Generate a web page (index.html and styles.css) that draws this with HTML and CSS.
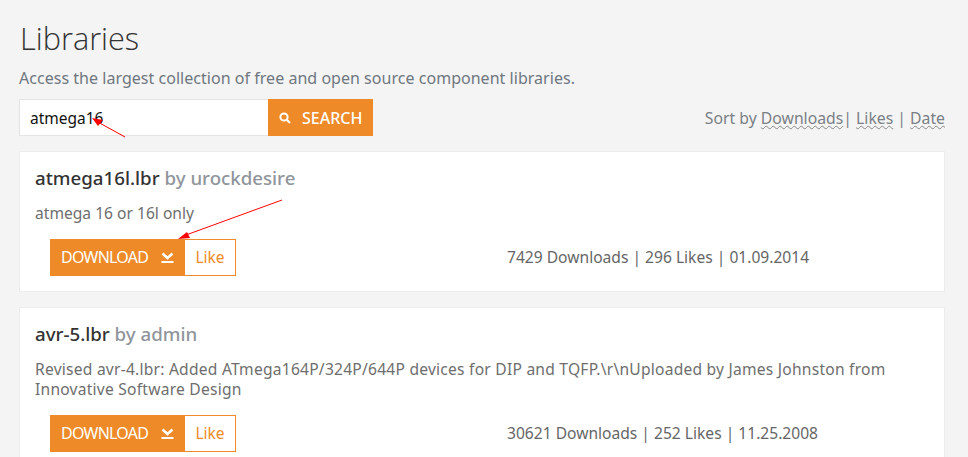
FILE: index.html
```html
<!DOCTYPE html>
<html lang="en">
<head>
    <meta charset="UTF-8">
    <title>Libraries</title>
    <link rel="stylesheet" href="styles.css">
</head>
<body>
    <h1>Libraries</h1>
    <p class="intro">Access the largest collection of free and open source component libraries.</p>

    <div class="toolbar">
        <form class="search">
            <input class="search-input" type="text" value="atmega16">
            <button class="search-btn" type="button">
                <svg width="12" height="12" viewBox="0 0 12 12"><circle cx="5" cy="5" r="3.6" fill="none" stroke="#fff" stroke-width="2"/><path d="M7.8 7.8L11 11" stroke="#fff" stroke-width="2.2"/></svg>
                SEARCH
            </button>
        </form>
        <div class="sort">Sort by <a href="#">Downloads</a>| <a href="#">Likes</a> | <a href="#">Date</a></div>
    </div>

    <div class="card">
        <h2>atmega16l.lbr <span class="by">by urockdesire</span></h2>
        <p class="desc">atmega 16 or 16l only</p>
        <div class="actions">
            <div class="btns">
                <a class="download" href="#">DOWNLOAD
                    <svg width="13" height="11" viewBox="0 0 13 11"><path d="M1.5 1.5L6.5 6L11.5 1.5" fill="none" stroke="#fff" stroke-width="2.6"/><path d="M0.5 10H12.5" stroke="#fff" stroke-width="2"/></svg>
                </a>
                <a class="like" href="#">Like</a>
            </div>
            <div class="stats">7429 Downloads | 296 Likes | 01.09.2014</div>
        </div>
    </div>

    <div class="card">
        <h2>avr-5.lbr <span class="by">by admin</span></h2>
        <p class="desc">Revised avr-4.lbr: Added ATmega164P/324P/644P devices for DIP and TQFP.\r\nUploaded by James Johnston from Innovative Software Design</p>
        <div class="actions">
            <div class="btns">
                <a class="download" href="#">DOWNLOAD
                    <svg width="13" height="11" viewBox="0 0 13 11"><path d="M1.5 1.5L6.5 6L11.5 1.5" fill="none" stroke="#fff" stroke-width="2.6"/><path d="M0.5 10H12.5" stroke="#fff" stroke-width="2"/></svg>
                </a>
                <a class="like" href="#">Like</a>
            </div>
            <div class="stats">30621 Downloads | 252 Likes | 11.25.2008</div>
        </div>
    </div>

    <!-- red arrows drawn on top of the screenshot -->
    <svg class="arrows" width="968" height="457" viewBox="0 0 968 457">
        <path d="M125 137L96 121" stroke="#f00" stroke-width="1"/>
        <path d="M92 118L103 120L98 126Z" fill="#f00"/>
        <path d="M282 200L186 235" stroke="#f00" stroke-width="1"/>
        <path d="M178 239L187 232L190 238Z" fill="#f00"/>
    </svg>
</body>
</html>
```

FILE: styles.css
```css
html, body {
    height: 457px;
    overflow: hidden;
}
body {
    margin: 0;
    padding: 0 23px 0 19px;
    background-color: #f4f4f4;
    font-family: "Noto Sans", "Open Sans", sans-serif;
    color: #666;
    position: relative;
}
h1 {
    margin: 0;
    padding: 20px 0 0 1px;
    font-size: 30.7px;
    line-height: 36px;
    font-weight: 300;
    color: #333;
    font-family: "Open Sans", sans-serif;
}
.intro {
    margin: 11px 0 0;
    font-size: 16px;
    letter-spacing: 0.03px;
    line-height: 22px;
    color: #6f7780;
}
.toolbar {
    display: flex;
    justify-content: space-between;
    align-items: center;
    margin-top: 10px;
}
.search {
    display: flex;
}
.search-input {
    box-sizing: border-box;
    width: 249px;
    height: 37px;
    padding: 0 10px;
    border: 1px solid #e4e4e4;
    border-right: 0;
    background: #fff;
    font-family: inherit;
    font-size: 15.5px;
    color: #111;
    outline: none;
}
.search-btn {
    display: flex;
    align-items: center;
    gap: 11px;
    width: 105px;
    height: 37px;
    padding: 0 0 0 11px;
    border: 0;
    background-color: #ee8a27;
    color: #fff;
    font-family: inherit;
    font-size: 16px;
    font-weight: 500;
}
.sort {
    font-size: 15.75px;
    color: #7a7f85;
    padding-top: 1px;
}
.sort a {
    color: #7a7f85;
    text-decoration: underline wavy #888 1px;
    text-underline-offset: 1px;
}
.card {
    margin-top: 15px;
    padding: 14px 15px 15px 15px;
    background: #fff;
    border: 1px solid #ececec;
}
.card + .card {
    height: 200px;
}
.card + .card .desc {
    letter-spacing: 0.23px;
}
h2 {
    margin: 0;
    font-size: 18.7px;
    line-height: 24px;
    font-weight: 500;
    color: #333;
}
.by {
    color: #8f959b;
}
.desc {
    margin: 13px 0 0;
    font-size: 15.6px;
    line-height: 20.5px;
    color: #6e6e6e;
}
.actions {
    display: flex;
    align-items: center;
    margin-top: 15px;
    padding-left: 15px;
}
.btns {
    display: flex;
    width: 457px;
}
.download {
    display: flex;
    align-items: center;
    justify-content: space-between;
    box-sizing: border-box;
    width: 135px;
    height: 37px;
    padding: 0 11px;
    background-color: #ee8a27;
    color: #fff;
    font-size: 16px;
    letter-spacing: -0.75px;
    text-decoration: none;
}
.like {
    display: flex;
    align-items: center;
    justify-content: center;
    box-sizing: border-box;
    width: 51px;
    height: 37px;
    border: 1px solid #ee8a27;
    border-left: 0;
    color: #ee8a27;
    font-size: 15.5px;
    text-decoration: none;
}
.stats {
    font-size: 15.6px;
    color: #666;
}
.arrows {
    position: absolute;
    top: 0;
    left: 0;
}
```
